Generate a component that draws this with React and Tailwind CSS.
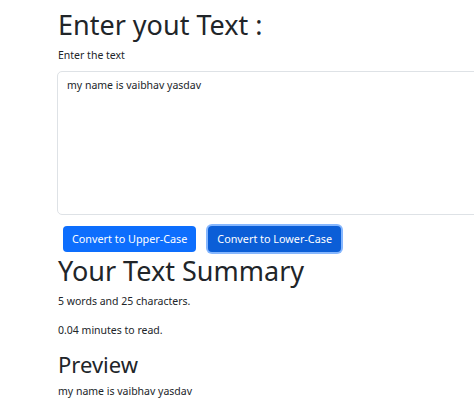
export default function App() {
  return (
    <div
      className="w-full h-[412px] overflow-hidden bg-white text-[#212529]"
      style={{ fontFamily: '"Noto Sans", "Open Sans", sans-serif' }}
    >
      <div className="pl-[57px] w-[500px]">
        <h1 className="text-[27px] leading-[32px] font-normal mt-[9px] ml-[1px]">Enter yout Text :</h1>
        <label className="block text-[10.5px] leading-[14px] mt-[7px] ml-[1px]">Enter the text</label>
        <textarea
          className="block mt-[9px] w-[440px] h-[144px] border border-[#dee2e6] rounded-[5px] px-[9px] py-[4px] text-[10.5px] leading-[18px] text-[#212529] resize-none outline-none"
          defaultValue="my name is vaibhav yasdav"
        />
        <div className="flex items-center mt-[11px] ml-[6px] gap-[12px]">
          <button className="h-[26px] px-[9px] rounded-[4px] bg-[#0d6efd] text-white text-[10.8px]">
            Convert to Upper-Case
          </button>
          <button className="h-[26px] px-[9px] rounded-[4px] bg-[#0b5ed7] text-white text-[10.8px] ring-[2px] ring-[#86b7fe]">
            Convert to Lower-Case
          </button>
        </div>
        <h2 className="text-[27px] leading-[32px] font-normal mt-[3px] ml-[1px]">Your Text Summary</h2>
        <p className="text-[10.5px] leading-[16px] mt-[6px] ml-[1px]">5 words and 25 characters.</p>
        <p className="text-[10.5px] leading-[16px] mt-[13px] ml-[1px]">0.04 minutes to read.</p>
        <h2 className="text-[22px] leading-[28px] font-normal mt-[12px] ml-[1px]">Preview</h2>
        <p className="text-[10.5px] leading-[16px] mt-[5px] ml-[1px]">my name is vaibhav yasdav</p>
      </div>
    </div>
  );
}
